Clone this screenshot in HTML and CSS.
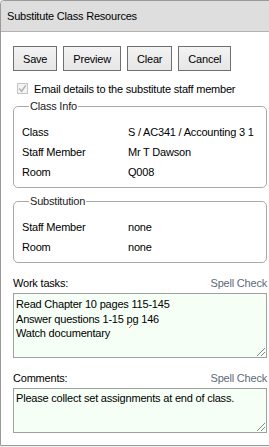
FILE: index.html
```html
<!DOCTYPE html>
<html>
<head>
<meta charset="utf-8">
<link rel="stylesheet" href="styles.css">
</head>
<body>
<div class="panel">
  <div class="header">Substitute Class Resources</div>
  <div class="content">
    <div class="buttons">
      <button class="btn">Save</button>
      <button class="btn">Preview</button>
      <button class="btn">Clear</button>
      <button class="btn">Cancel</button>
    </div>
    <label class="check">
      <span class="box"><svg width="9" height="9" viewBox="0 0 9 9"><path d="M1.2 4.6 L3.6 7.2 L7.8 1.4" fill="none" stroke="#b0b0b0" stroke-width="1.5"/></svg></span>
      <span>Email details to the substitute staff member</span>
    </label>
    <fieldset class="group">
      <legend>Class Info</legend>
      <div class="rows">
        <span>Class</span><span>S / AC341 / Accounting 3 1</span>
        <span>Staff Member</span><span>Mr T Dawson</span>
        <span>Room</span><span>Q008</span>
      </div>
    </fieldset>
    <fieldset class="group">
      <legend>Substitution</legend>
      <div class="rows">
        <span>Staff Member</span><span>none</span>
        <span>Room</span><span>none</span>
      </div>
    </fieldset>
    <div class="field">
      <div class="field-head"><span>Work tasks:</span><span class="spell">Spell Check</span></div>
      <div class="area tall">Read Chapter 10 pages 115-145<br>Answer questions 1-15 <span class="err">pg</span> 146<br>Watch documentary<span class="grip"></span></div>
    </div>
    <div class="field">
      <div class="field-head"><span>Comments:</span><span class="spell">Spell Check</span></div>
      <div class="area short">Please collect set assignments at end of class.<span class="grip"></span></div>
    </div>
  </div>
</div>
</body>
</html>
```
FILE: styles.css
```css
html, body {
  margin: 0;
  padding: 0;
  overflow: hidden;
  background: #f0f0f0;
}
body {
  font-family: "Liberation Sans", Arial, sans-serif;
  font-size: 11px;
  letter-spacing: -0.2px;
  color: #000;
}
.panel {
  width: 290px;
  height: 444px;
  border: 1px solid #9a9a9a;
  border-radius: 4px 4px 0 0;
  background: #fff;
  box-sizing: content-box;
}
.header {
  height: 30px;
  line-height: 30px;
  background: #dedede;
  border-bottom: 1px solid #b4b4b4;
  padding-left: 6px;
  border-radius: 4px 4px 0 0;
}
.content {
  width: 254px;
  padding: 14px 0 0 12px;
}
.buttons {
  display: flex;
  gap: 6px;
}
.btn {
  font: inherit;
  letter-spacing: inherit;
  color: #000;
  height: 25px;
  padding: 0 9px;
  border: 1px solid #707070;
  background: linear-gradient(#f3f3f3, #e6e6e6);
  border-radius: 0;
}
.check {
  display: flex;
  align-items: center;
  gap: 6px;
  margin: 10px 0 0 4px;
  height: 15px;
}
.box {
  width: 9px;
  height: 9px;
  border: 1px solid #c4c4c4;
  background: #f4f4f4;
  display: flex;
}
.group {
  margin: 4px 0 0 0;
  padding: 12px 0 8px 8px;
  border: 1px solid #aaaaaa;
  border-radius: 5px;
}
.group + .group { margin-top: 7px; }
.group legend {
  padding: 0 1px;
  margin-left: 7px;
  color: #222;
  line-height: 13px;
}
.rows {
  display: grid;
  grid-template-columns: 106px 1fr;
  row-gap: 6px;
  line-height: 14px;
}
.field { margin-top: 13px; }
.field-head {
  display: flex;
  justify-content: space-between;
  line-height: 14px;
}
.spell { color: #5c6a7a; }
.area {
  position: relative;
  margin-top: 3px;
  border: 1px solid #a0a0a0;
  background: #f5fff5;
  padding: 3px 2px;
  line-height: 14.5px;
  box-sizing: border-box;
}
.area.tall { height: 65px; }
.area.short { height: 45px; padding-top: 2px; }
.err {
  text-decoration: underline wavy #e03030;
  text-decoration-thickness: 1px;
}
.grip {
  position: absolute;
  right: 1px;
  bottom: 1px;
  width: 8px;
  height: 8px;
  background: linear-gradient(135deg, transparent 45%, #888 45%, #888 55%, transparent 55%, transparent 70%, #888 70%, #888 80%, transparent 80%);
}
```
